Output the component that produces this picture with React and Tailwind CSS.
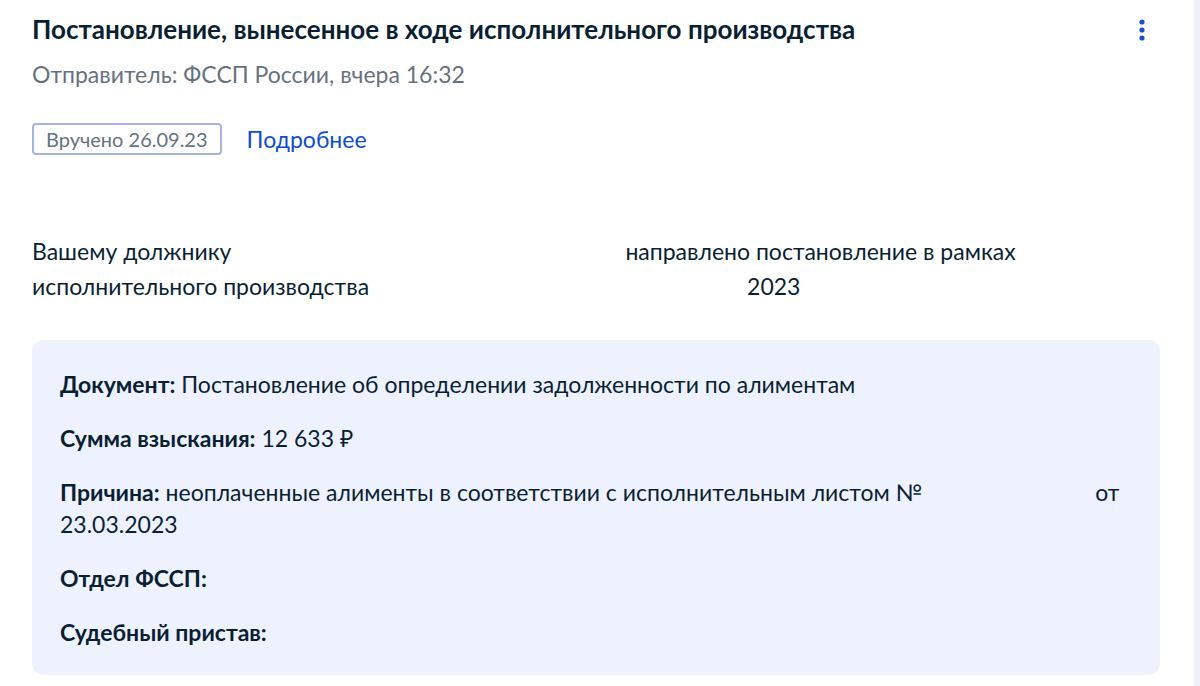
import React from 'react';

const Field = ({ label, children }) => (
  <p className="leading-[32px]">
    <span className="font-bold">{label}</span>
    {children ? <> {children}</> : null}
  </p>
);

const App = () => {
  return (
    <div className="flex min-h-[686px] w-[1200px] bg-white text-[#0b1f33] font-['Lato','Noto_Sans',sans-serif]">
      <div className="flex-1 pl-8 pr-[34px]">
        {/* Header */}
        <div className="flex items-start justify-between pt-[13px]">
          <h1 className="text-[26px] leading-[32px] font-bold">
            Постановление, вынесенное в ходе исполнительного производства
          </h1>
          <button className="mr-[6px] mt-[5px] flex h-6 w-6 items-center justify-center">
            <svg width="8" height="24" viewBox="0 0 8 24" fill="#1e4fc8">
              <circle cx="4" cy="4" r="2.6" />
              <circle cx="4" cy="12" r="2.6" />
              <circle cx="4" cy="20" r="2.6" />
            </svg>
          </button>
        </div>
        <p className="mt-[15px] text-[23px] leading-[28px] text-[#66727f]">
          Отправитель: ФССП России, вчера 16:32
        </p>

        {/* Status */}
        <div className="mt-[34px] flex items-center gap-[25px]">
          <span className="flex h-[32px] items-center rounded-[4px] border-2 border-[#a3b4df] px-[12px] text-[20px] text-[#66727f]">
            Вручено 26.09.23
          </span>
          <a href="#" className="text-[23px] text-[#0d4cd3]">Подробнее</a>
        </div>

        {/* Message */}
        <p className="mt-[77px] text-[23px] leading-[35px]">
          Вашему должнику<span className="inline-block w-[394px]" />направлено постановление в рамках
          <br />
          исполнительного производства<span className="inline-block w-[378px]" />2023
        </p>

        {/* Details */}
        <div className="mt-[36px] flex flex-col gap-[22px] rounded-[12px] bg-[#edf2fe] px-7 pt-[28px] pb-[27px] text-[23px]">
          <Field label="Документ:">Постановление об определении задолженности по алиментам</Field>
          <Field label="Сумма взыскания:">12 633 ₽</Field>
          <Field label="Причина:">
            неоплаченные алименты в соответствии с исполнительным листом №<span className="inline-block w-[173px]" />от
            <br />
            23.03.2023
          </Field>
          <Field label="Отдел ФССП:" />
          <Field label="Судебный пристав:" />
        </div>
      </div>
      <div className="w-[6px] bg-[#eef1f8]" />
    </div>
  );
};

export default App;
